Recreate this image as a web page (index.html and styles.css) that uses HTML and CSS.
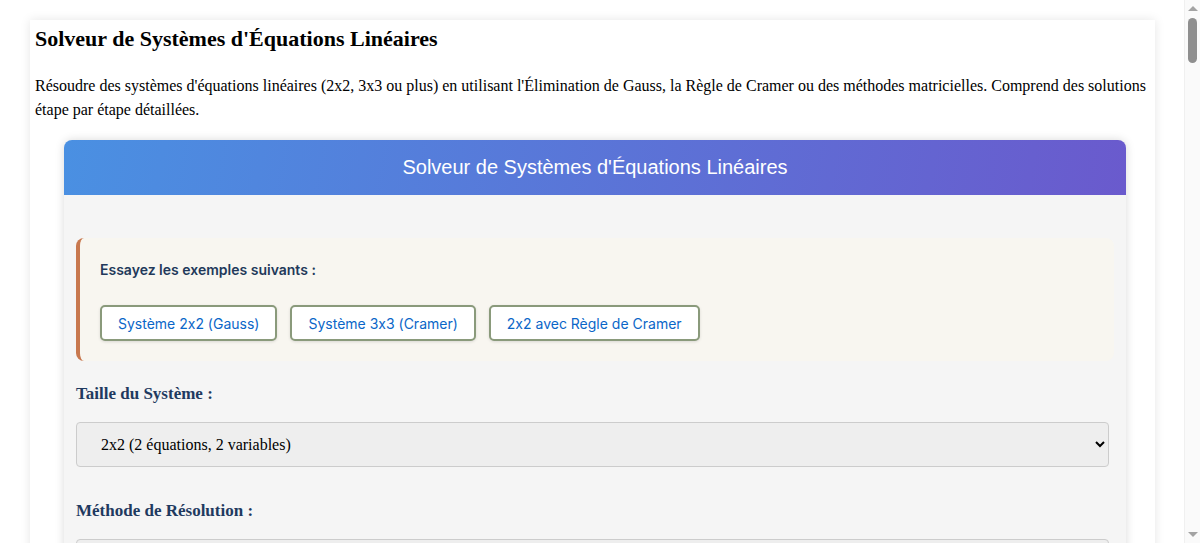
FILE: index.html
```html
<!DOCTYPE html>
<html lang="fr">
<head>
    <meta charset="UTF-8">
    <meta name="viewport" content="width=device-width, initial-scale=1.0">
    <title>Solveur de Systèmes d'Équations Linéaires</title>
    <link rel="stylesheet" href="styles.css">
</head>
<body>
    <div class="page">
        <h2 class="page-title">Solveur de Systèmes d'Équations Linéaires</h2>
        <p class="intro">Résoudre des systèmes d'équations linéaires (2x2, 3x3 ou plus) en utilisant l'Élimination de Gauss, la Règle de Cramer ou des méthodes matricielles. Comprend des solutions étape par étape détaillées.</p>

        <div class="solver">
            <div class="solver-header">Solveur de Systèmes d'Équations Linéaires</div>
            <div class="solver-body">
                <div class="examples">
                    <div class="examples-title">Essayez les exemples suivants :</div>
                    <div class="examples-list">
                        <button class="example-btn">Système 2x2 (Gauss)</button>
                        <button class="example-btn">Système 3x3 (Cramer)</button>
                        <button class="example-btn">2x2 avec Règle de Cramer</button>
                    </div>
                </div>

                <div class="form-group">
                    <label class="form-label" for="taille">Taille du Système :</label>
                    <select id="taille" class="form-select">
                        <option>2x2 (2 équations, 2 variables)</option>
                        <option>3x3 (3 équations, 3 variables)</option>
                        <option>4x4 (4 équations, 4 variables)</option>
                    </select>
                </div>

                <div class="form-group">
                    <label class="form-label" for="methode">Méthode de Résolution :</label>
                    <select id="methode" class="form-select">
                        <option>Élimination de Gauss</option>
                        <option>Règle de Cramer</option>
                        <option>Matrice inverse</option>
                    </select>
                </div>

                <div class="form-group">
                    <label class="form-label">Coefficients :</label>
                    <div class="equations">
                        <div class="equation"><input type="text" value="2"> x + <input type="text" value="3"> y = <input type="text" value="8"></div>
                        <div class="equation"><input type="text" value="1"> x - <input type="text" value="1"> y = <input type="text" value="1"></div>
                    </div>
                </div>

                <button class="solve-btn">Résoudre le système</button>
            </div>
        </div>
    </div>

    <!-- barre de défilement dessinée -->
    <div class="scrollbar">
        <span class="scroll-up"></span>
        <span class="scroll-thumb"></span>
        <span class="scroll-down"></span>
    </div>
</body>
</html>
```

FILE: styles.css
```css
body {
    margin: 0;
    padding: 20px 45px 20px 30px;
    background-color: #fff;
    font-family: "Liberation Serif", "Times New Roman", serif;
    color: #000;
}
.page {
    background-color: #fff;
    padding: 5px;
    box-shadow: 0 0 10px rgba(0, 0, 0, 0.1);
}
.page-title {
    margin: 0 0 21px;
    font-size: 22px;
    line-height: 28px;
}
.intro {
    margin: 0 0 18px;
    font-size: 16px;
    line-height: 24px;
}
.solver {
    margin: 0 24px 30px 29px;
    border-radius: 8px;
    background-color: #f5f5f5;
    box-shadow: 0 0 10px rgba(0, 0, 0, 0.15);
    overflow: hidden;
}
.solver-header {
    height: 55px;
    display: flex;
    align-items: center;
    justify-content: center;
    background: linear-gradient(100deg, #4a90e2, #6a5acd);
    color: #fff;
    font-family: "Liberation Sans", Arial, sans-serif;
    font-size: 20px;
}
.solver-body {
    padding: 43px 12px 30px;
}
.examples {
    background-color: #f8f6f0;
    border-left: 4px solid #c8784f;
    border-radius: 8px;
    padding: 20px;
    margin-bottom: 23px;
}
.examples-title {
    font-family: Inter, "Open Sans", sans-serif;
    font-feature-settings: "calt" 0;
    font-weight: 600;
    font-size: 14px;
    line-height: 24px;
    color: #22395a;
    margin-bottom: 23px;
}
.examples-list {
    display: flex;
    gap: 13px;
}
.example-btn {
    height: 36px;
    padding: 0 16px;
    background-color: #fff;
    border: 2px solid #8a9a7b;
    border-radius: 5px;
    color: #0a66c8;
    font-family: Inter, "Open Sans", sans-serif;
    font-feature-settings: "calt" 0;
    font-size: 14px;
    box-shadow: 0 1px 3px rgba(0, 0, 0, 0.12);
    cursor: pointer;
}
.form-group {
    margin-bottom: 34px;
}
.form-label {
    display: block;
    margin-bottom: 18px;
    font-weight: bold;
    font-size: 17px;
    line-height: 20px;
    color: #1f3a60;
}
.form-select {
    display: block;
    width: calc(100% - 5px);
    padding: 12px 20px;
    font-family: "Liberation Serif", "Times New Roman", serif;
    font-size: 16px;
    background-color: #eee;
    border: 1px solid #ccc;
    border-radius: 4px;
    color: #000;
}
.equations {
    display: flex;
    flex-direction: column;
    gap: 12px;
}
.equation {
    font-size: 16px;
}
.equation input {
    width: 60px;
    padding: 8px;
    border: 1px solid #ccc;
    border-radius: 4px;
    font-size: 16px;
    text-align: center;
}
.solve-btn {
    padding: 12px 24px;
    border: none;
    border-radius: 5px;
    background-color: #4a90e2;
    color: #fff;
    font-size: 16px;
    cursor: pointer;
}
.scrollbar {
    position: fixed;
    top: 0;
    right: 0;
    width: 15px;
    height: 100%;
    background-color: #fafafa;
    border-left: 1px solid #f0f0f0;
}
.scroll-up, .scroll-down {
    position: absolute;
    left: 3px;
    width: 0;
    height: 0;
    border-left: 5px solid transparent;
    border-right: 5px solid transparent;
}
.scroll-up {
    top: 6px;
    border-bottom: 5px solid #a3a3a3;
}
.scroll-down {
    bottom: 6px;
    border-top: 5px solid #a3a3a3;
}
.scroll-thumb {
    position: absolute;
    top: 18px;
    left: 3px;
    width: 9px;
    height: 45px;
    border-radius: 5px;
    background-color: #8f8f8f;
}
```
